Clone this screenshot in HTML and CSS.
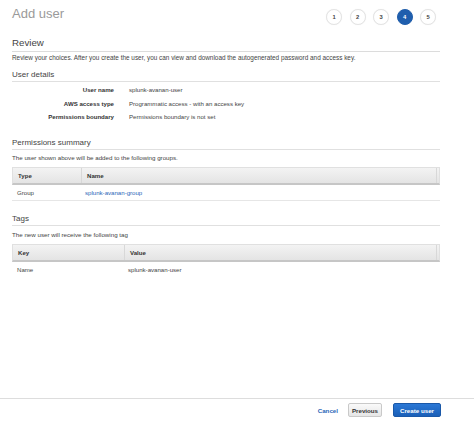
FILE: index.html
```html
<!DOCTYPE html>
<html lang="en">
<head>
<meta charset="utf-8">
<title>Add user</title>
<link rel="stylesheet" href="styles.css">
</head>
<body>
<div class="page">
  <main class="content">
    <header class="header">
      <h1 class="title">Add user</h1>
      <ol class="steps">
        <li class="step">1</li>
        <li class="step">2</li>
        <li class="step">3</li>
        <li class="step active">4</li>
        <li class="step">5</li>
      </ol>
    </header>

    <h2 class="review-title">Review</h2>
    <p class="desc desc-review">Review your choices. After you create the user, you can view and download the autogenerated password and access key.</p>

    <h3 class="section-title sec-details">User details</h3>
    <dl class="details">
      <dt>User name</dt><dd>splunk-avanan-user</dd>
      <dt>AWS access type</dt><dd>Programmatic access - with an access key</dd>
      <dt>Permissions boundary</dt><dd>Permissions boundary is not set</dd>
    </dl>

    <h3 class="section-title sec-perm">Permissions summary</h3>
    <p class="desc desc-perm">The user shown above will be added to the following groups.</p>
    <div class="table t-groups">
      <div class="trow thead"><div class="cell c1">Type</div><div class="cell c2">Name</div><div class="cell c3"></div></div>
      <div class="trow tbody bordered"><div class="cell c1">Group</div><div class="cell c2"><a class="link" href="#">splunk-avanan-group</a></div><div class="cell c3"></div></div>
    </div>

    <h3 class="section-title sec-tags">Tags</h3>
    <p class="desc desc-tags">The new user will receive the following tag</p>
    <div class="table t-tags">
      <div class="trow thead"><div class="cell c1">Key</div><div class="cell c2">Value</div><div class="cell c3"></div></div>
      <div class="trow tbody"><div class="cell c1">Name</div><div class="cell c2">splunk-avanan-user</div><div class="cell c3"></div></div>
    </div>
  </main>

  <footer class="footer">
    <a class="btn-link" href="#">Cancel</a>
    <button class="btn btn-secondary" type="button">Previous</button>
    <button class="btn btn-primary" type="button">Create user</button>
  </footer>
</div>
</body>
</html>
```

FILE: styles.css
```css
* { box-sizing: border-box; }

html, body {
  margin: 0;
  padding: 0;
  background: #ffffff;
}

body {
  font-family: "Liberation Sans", Arial, Helvetica, sans-serif;
  color: #444444;
}

.page {
  min-height: 100vh;
  display: flex;
  flex-direction: column;
}

.content {
  flex: 1;
  padding: 0 34px 0 12px;
}

.header {
  height: 34px;
  display: flex;
  justify-content: space-between;
  align-items: flex-start;
}

.title {
  margin: 6px 0 0;
  font-size: 13px;
  line-height: 15px;
  font-weight: normal;
  color: #9a9a9a;
}

.steps {
  list-style: none;
  margin: 9px 4px 0 0;
  padding: 0;
  display: flex;
  gap: 7.5px;
}

.step {
  width: 16px;
  height: 16px;
  border-radius: 50%;
  border: 1px solid #e4e4e4;
  background: #fff;
  box-shadow: 0 0 1px rgba(0,0,0,0.08);
  font-size: 5.8px;
  font-weight: bold;
  color: #444;
  display: flex;
  align-items: center;
  justify-content: center;
}

.step.active {
  background: #1f5ead;
  border-color: #1f5ead;
  color: #fff;
}

.review-title {
  margin: 3px 0 0;
  font-size: 9.7px;
  line-height: 12px;
  font-weight: normal;
  color: #444;
  padding-bottom: 2px;
  border-bottom: 1px solid #dcdcdc;
}

.desc {
  margin: 0;
  font-size: 6.2px;
  line-height: 8px;
  color: #444;
}

.desc-review { margin-top: 2px; font-size: 6.4px; }

.section-title {
  margin: 0;
  font-size: 8px;
  line-height: 10px;
  font-weight: normal;
  color: #444;
  padding-bottom: 1px;
  border-bottom: 1px solid #e0e0e0;
}

.sec-details { margin-top: 8px; }
.sec-perm { margin-top: 14px; }
.sec-tags { margin-top: 13px; }

.details {
  margin: 1px 0 0;
  display: grid;
  grid-template-columns: 102px 1fr;
  column-gap: 15px;
  font-size: 6.1px;
  line-height: 13.5px;
}

.details dt {
  font-weight: bold;
  color: #333;
  text-align: right;
}

.details dd {
  margin: 0;
  color: #444;
}

.desc-perm { margin-top: 4px; }
.desc-tags { margin-top: 4.5px; }

.table {
  margin-top: 5px;
  font-size: 6.1px;
}

.trow {
  display: flex;
}

.thead {
  height: 18px;
  background: linear-gradient(#f3f3f3, #e4e4e4);
  border: 1px solid #e0e0e0;
  border-bottom: 2px solid #c6c6c6;
  font-weight: bold;
  color: #333;
}

.tbody {
  height: 16.5px;
  color: #444;
}

.tbody.bordered {
  border-bottom: 1px solid #e6e6e6;
}

.cell {
  padding-left: 5px;
  display: flex;
  align-items: center;
}

.thead .cell + .cell {
  border-left: 1px solid #d8d8d8;
}

.t-groups .c1 { width: 68px; }
.t-tags .c1 { width: 111px; }
.c2 { flex: 1; }
.c3 { width: 3px; padding: 0; }

.link {
  color: #2b67b8;
  text-decoration: none;
}

.footer {
  border-top: 1px solid #dddddd;
  padding: 4px 33px 4px 0;
  display: flex;
  justify-content: flex-end;
  align-items: center;
  height: 23px;
}

.btn-link {
  font-size: 6.2px;
  font-weight: bold;
  color: #2b67b8;
  text-decoration: none;
  margin-right: 10px;
}

.btn {
  height: 14px;
  font-family: inherit;
  font-size: 6.2px;
  font-weight: bold;
  border-radius: 2px;
  padding: 0;
  display: flex;
  align-items: center;
  justify-content: center;
}

.btn-secondary {
  width: 34px;
  background: linear-gradient(#fafafa, #e6e6e6);
  border: 1px solid #c9c9c9;
  color: #333;
  margin-right: 11px;
}

.btn-primary {
  width: 48px;
  background: linear-gradient(#2b78d6, #1a5fb8);
  border: 1px solid #1a58a8;
  color: #fff;
}
```
